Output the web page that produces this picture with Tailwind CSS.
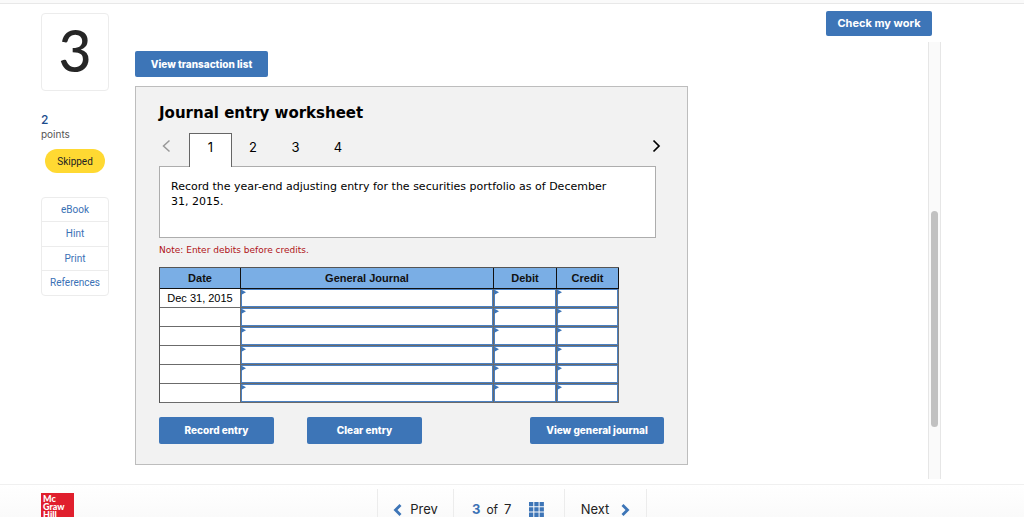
<!DOCTYPE html>
<html lang="en">
<head>
  <meta charset="UTF-8" />
  <meta name="viewport" content="width=device-width, initial-scale=1.0"/>
  <title>Journal entry worksheet</title>
  <script src="https://cdn.jsdelivr.net/npm/@tailwindcss/browser@4"></script>
</head>
<body class="h-screen overflow-hidden flex flex-col bg-white text-black font-['Inter',sans-serif]">

<div class="h-1 shrink-0 bg-[#fafafa] border-b border-[#e8e8e8]"></div>

<main class="flex-1 min-h-0 flex">
  <aside class="w-[109px] shrink-0 pl-[41px] pt-[9px]">
    <div class="h-[78px] pb-1 flex items-center justify-center border border-[#ececec] rounded font-['Lato',sans-serif] font-medium text-[57px] leading-none text-[#262626]">3</div>
    <p class="mt-[22px] text-xs leading-[14px] font-medium text-[#1c4c8c]">2</p>
    <p class="text-[10px] leading-[14px] text-[#555]">points</p>
    <div class="mt-2 mx-1 h-6 flex items-center justify-center rounded-full bg-[#ffd932] font-['Roboto',sans-serif] text-[10px] text-[#222]">Skipped</div>
    <nav class="mt-6 h-[99px] grid grid-rows-4 border border-[#ececec] rounded divide-y divide-[#ececec] text-center font-['Roboto',sans-serif] text-[10px] leading-6 text-[#3a71b5]">
      <a href="#" class="block">eBook</a>
      <a href="#" class="block">Hint</a>
      <a href="#" class="block">Print</a>
      <a href="#" class="block">References</a>
    </nav>
  </aside>

  <div class="flex-1 min-w-0 flex flex-col pl-[26px]">
    <div class="h-[38px] shrink-0 flex justify-end pt-[7px] pr-[92px]">
      <button class="h-[25px] w-[106px] rounded-xs bg-[#3d75b7] text-white text-[11px] font-bold">Check my work</button>
    </div>

    <div class="flex-1 min-h-0 flex mb-[5px] pr-[83px]">
      <div class="flex-1 min-w-0 pt-[9px]">
        <button class="block h-[26px] w-[133px] rounded-xs bg-[#3d75b7] text-white text-[10px] font-extrabold">View transaction list</button>

        <section class="mt-[9px] max-w-[553px] px-[23px] pt-4 pb-5 bg-[#f2f2f2] border border-[#bdbdbd]">
          <h1 class="font-['DejaVu_Sans',sans-serif] font-bold text-[15px] leading-5">Journal entry worksheet</h1>

          <div class="mt-[10px] mr-2 flex items-start text-[13px]">
            <button aria-label="Previous" class="w-[30px] h-[26px] pl-[3px] flex items-center">
              <svg width="9" height="14" viewBox="0 0 9 14" fill="none" stroke="#999" stroke-width="1.5"><path d="M7.5 1.5 1.5 7l6 5.5"/></svg>
            </button>
            <button class="relative w-[43px] h-[34px] -mb-px pb-[6px] bg-white border border-b-0 border-[#666]">1</button>
            <button class="w-[42px] h-[30px]">2</button>
            <button class="w-[43px] h-[30px]">3</button>
            <button class="w-[42px] h-[30px]">4</button>
            <button aria-label="Following" class="ml-auto -mr-4 w-5 h-[26px] flex items-center">
              <svg width="9" height="14" viewBox="0 0 9 14" fill="none" stroke="#000" stroke-width="1.7"><path d="M1.5 1.5 7 7l-5.5 5.5"/></svg>
            </button>
          </div>

          <div class="mr-2 h-[72px] pl-[11px] pr-10 py-3 bg-white border border-[#adadad] font-['DejaVu_Sans',sans-serif] text-[11px] leading-[15px]">
            Record the year-end adjusting entry for the securities portfolio as of December 31, 2015.
          </div>
          <p class="mt-1 font-['DejaVu_Sans',sans-serif] text-[9px] leading-4 text-[#b01218]">Note: Enter debits before credits.</p>

          <table class="mt-[9px] w-[460px] table-fixed border-separate border-spacing-0 border-t border-l border-[#555] bg-white font-['Liberation_Sans',sans-serif] text-[11px]">
            <thead>
              <tr class="h-[21px] bg-[#7aaee5] text-[#111]">
                <th class="w-[81px] p-0 border-r border-b border-[#111]">Date</th>
                <th class="p-0 border-r border-b border-[#111]">General Journal</th>
                <th class="w-[63px] p-0 border-r border-b border-[#111]">Debit</th>
                <th class="w-[62px] p-0 border-r border-b border-[#111]">Credit</th>
              </tr>
            </thead>
            <tbody id="journalRows"></tbody>
          </table>

          <div class="mt-[14px] flex text-[10px] font-extrabold text-white">
            <button class="h-[27px] w-[115px] rounded-xs bg-[#3d75b7]">Record entry</button>
            <button class="ml-[33px] h-[27px] w-[115px] rounded-xs bg-[#3d75b7]">Clear entry</button>
            <button class="ml-auto h-[27px] w-[134px] rounded-xs bg-[#3d75b7]">View general journal</button>
          </div>
        </section>
      </div>

      <div class="w-[13px] shrink-0 pt-[169px] bg-[#fafafa] border-x border-[#e6e6e6]">
        <div class="mx-auto w-[7px] h-[216px] rounded-full bg-[#c1c1c1]"></div>
      </div>
    </div>
  </div>
</main>

<footer class="h-[33px] shrink-0 overflow-hidden grid grid-cols-[1fr_auto_1fr] items-start border-t border-[#f0f0f0] bg-linear-to-b from-white to-[#fafafa]">
  <div class="ml-[41px] mt-2 w-[33px] h-[33px] pl-[2px] pt-[2px] bg-[#e01f2d] text-white font-['Lato',sans-serif] font-black text-[9px] leading-[8px]">Mc<br>Graw<br>Hill</div>
  <div class="mt-1 h-[41px] flex border-x border-[#ececec] divide-x divide-[#ececec] text-[13px] text-[#222]">
    <button class="w-[76px] flex items-center justify-center gap-2">
      <svg width="9" height="12" viewBox="0 0 9 12" fill="none" stroke="#3d75b7" stroke-width="2.8"><path d="M7.5 1 2.5 6l5 5"/></svg>
      Prev
    </button>
    <div class="w-[111px] pl-[18px] flex items-center text-xs">
      <span class="font-bold text-[13px] text-[#3a71b5]">3</span>
      <span class="ml-[6px]">of</span>
      <span class="ml-[6px] text-[13px]">7</span>
      <button aria-label="Question list" class="ml-[18px]">
        <svg width="15" height="15" viewBox="0 0 15 15" fill="#3d75b7"><path d="M0 0h4.3v4.3H0zM5.3 0h4.3v4.3H5.3zM10.6 0h4.3v4.3h-4.3zM0 5.3h4.3v4.3H0zM5.3 5.3h4.3v4.3H5.3zM10.6 5.3h4.3v4.3h-4.3zM0 10.6h4.3v4.3H0zM5.3 10.6h4.3v4.3H5.3zM10.6 10.6h4.3v4.3h-4.3z"/></svg>
      </button>
    </div>
    <button class="w-[81px] flex items-center justify-center gap-3">
      Next
      <svg width="9" height="12" viewBox="0 0 9 12" fill="none" stroke="#3d75b7" stroke-width="2.8"><path d="M1.5 1l5 5-5 5"/></svg>
    </button>
  </div>
</footer>

<script>
  const dates = ["Dec 31, 2015", "", "", "", "", ""];
  const columns = ["General Journal", "Debit", "Credit"];

  dates.forEach((date, i) => {
    const row = document.createElement("tr");
    row.className = "h-[19px]";
    row.innerHTML = `<td class="p-0 border-r border-b border-[#6b6b6b] text-center leading-4">${date}</td>` +
      columns.map(c => `<td class="relative p-0 border-r border-b border-[#6b6b6b]">
        <input type="text" aria-label="${c} row ${i + 1}" class="block w-full h-[18px] px-1 border border-[#4a80c2] bg-white outline-none">
        <svg class="absolute left-0 top-0" width="5" height="6" viewBox="0 0 5 6" fill="#3d75b7"><path d="M0 0.5 5 3.2 0 6z"/></svg>
      </td>`).join("");
    document.getElementById("journalRows").appendChild(row);
  });
</script>

</body>
</html>
